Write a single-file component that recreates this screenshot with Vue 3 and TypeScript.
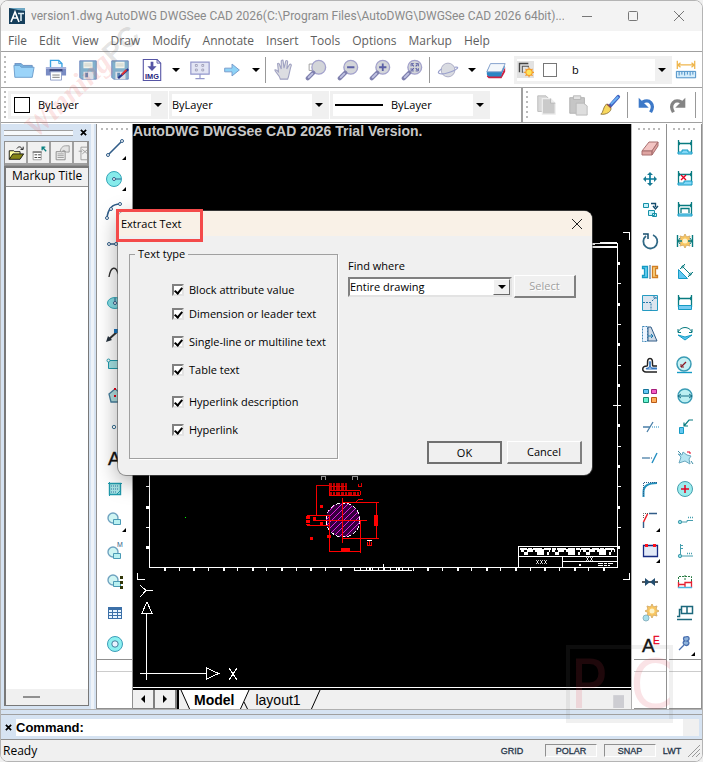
<script setup lang="ts">
import { ref } from 'vue'

interface Tool { id: string; label: string; more?: boolean }
interface Item { kind: 'icon' | 'caret' | 'sep'; id?: string; label?: string }

const menus = ['File', 'Edit', 'View', 'Draw', 'Modify', 'Annotate', 'Insert', 'Tools', 'Options', 'Markup', 'Help']

const lens = '<circle cx="15" cy="9" r="7.500" fill="#d3d5d9" stroke="#a3a2cc" stroke-width="1.500"/><path d="M9 15l-6 6" stroke="#7f80ae" stroke-width="4.500" stroke-linecap="round"/><path d="M8 16l-4 4" stroke="#c0c2e2" stroke-width="2" stroke-linecap="round"/>'
const floppy = '<path d="M3 2h18v20H5l-2-2z" fill="#83b1cc" stroke="#7089c0"/><path d="M7 3h10v7H7z" fill="#f1f3ec"/><path d="M8 5.500h8M8 7.500h8" stroke="#c5cbc4"/><path d="M7 14h11v8H7z" fill="#dcdfe6"/><path d="M9 15h3v5H9z" fill="#5d88b4"/>'
const shapes = '<circle cx="10" cy="10" r="5" fill="#cff5f3" stroke="#6fa3c0" stroke-width="1.400"/><path d="M10.500 11.500h7v5h-7z" fill="#b9f0f0" stroke="#4a9ab5"/>'
const dimBar = '<path d="M5.500 4v12M18.500 4v12M5 7.500h14" stroke="#087b80" stroke-width="1.300" fill="none"/><path d="M7 6L5 7.500 7 9M17 6l2 1.500L17 9" stroke="#087b80" fill="none"/>'
const star = '<path d="M12 5l1.500 3 3.500-1-1 3.500 3 1.500-3 1.500 1 3.500-3.500-1-1.500 3-1.500-3-3.500 1 1-3.500-3-1.500 3-1.500-1-3.500 3.500 1z" fill="#fbc862" stroke="#d9b06a"/><circle cx="12" cy="12" r="2.500" fill="#fdf3c8"/>'

const icons: Record<string, string> = {
  open: '<path d="M2 5h7l2 2h10v3H3z" fill="#74b3e0" stroke="#6a8dc0"/><path d="M1 7h6l2 2h14l-2 11H2z" fill="#9bd4f9" stroke="#6a9ccc"/>',
  print: '<path d="M6 10V1.500h9l3.500 3.500v5z" fill="#f4fbff" stroke="#3aa3e3" stroke-width="1.500"/><path d="M15 1.500V5h3.500" fill="none" stroke="#3aa3e3"/><path d="M1 9h22v9H1z" fill="#7a8cc4"/><path d="M1 9h22v2H1z" fill="#a9b4dd"/><path d="M5 11h14v3H5z" fill="#3f4a80"/><path d="M6 14h12v9H6z" fill="#fff" stroke="#8d9cc8"/><path d="M8 17.500h8M8 20h8" stroke="#777"/>',
  save: floppy,
  saveas: floppy + '<path d="M10 21l11-10" stroke="#27368b" stroke-width="2.500"/><path d="M14 17l5-5" stroke="#e33030" stroke-width="2"/>',
  img: '<path d="M2.500 .5h15l4 4v19h-19z" fill="#fff" stroke="#5655a5" stroke-width="1.200"/><path d="M17.500 .5v4h4" fill="none" stroke="#5655a5"/><path d="M10.500 3h3v5h3.500l-5 5-5-5h3.500z" fill="#5655a5"/><text x="12" y="21.500" font-size="8" font-weight="700" text-anchor="middle" fill="#24247c" font-family="Liberation Sans, sans-serif">IMG</text>',
  monitor: '<path d="M2 3.500h20v13H2zM12 17v4M7 21.500h10" fill="#e3e5f4" stroke="#9498cb" stroke-width="1.300"/><path d="M7 6h2v2H7zM14 6h2v2h-2zM7 11h2v2H7zM14 11h2v2h-2z" fill="#fff" stroke="#8888a8" stroke-width=".8"/>',
  next: '<path d="M4 10h8V5.500l8 6.500-8 6.500V14H4z" fill="#8ed3f7" stroke="#7497c8"/>',
  hand: '<path d="M8 22c-1-5-6-8-6-10 1-1 3 1 4 2L5 5c1-1 2 0 2 1l2 5V2c1-1 2-1 2 0l1 8 2-8c1-1 2 0 2 1l-1 8 3-5c1-1 2 0 2 1-2 5-2 10-4 15z" fill="#dcdde2" stroke="#a0a2c2" stroke-width="1.200"/>',
  zoomwin: '<path d="M4.500 5.500h6v7h-6z" fill="none" stroke="#999"/>' + lens,
  zoomout: lens + '<path d="M11 9h8" stroke="#5b5fa5" stroke-width="2"/>',
  zoomin: lens + '<path d="M11 9h8M15 5v8" stroke="#5b5fa5" stroke-width="2"/>',
  zoomall: lens + '<path d="M12 6l2 2m2 2l2 2M18 6l-2 2m-2 2l-2 2" stroke="#5b5fa5" stroke-width="1.300"/><path d="M11 8V5h3M16 5h3v3M19 10v3h-3M14 13h-3v-3" fill="none" stroke="#5b5fa5"/>',
  planet: '<circle cx="12" cy="12" r="7.500" fill="#d9dbe1" stroke="#a7a9c3"/><path d="M5 11c-7 4-3 7 7 4s14-7 7-6" fill="none" stroke="#9aa0cc" stroke-width="1.300"/>',
  eraser: '<path d="M3 17h15l4-8v5l-4 7H4l-2-2z" fill="#cf2040"/><path d="M2 13l3-5h17l-4 9v2H4l-2-2z" fill="#2b86c4"/><path d="M6 5h16l-4 9H2z" fill="#f3f7fb" stroke="#7f9ccb"/>',
  ruler: '<path d="M2.500 2v9M21.500 2v9M3 6.500h18M6 4L3 6.500 6 9M18 4l3 2.500L18 9" fill="none" stroke="#efb64d" stroke-width="1.400"/><path d="M1.500 13.500h21v7h-21z" fill="#d5edfb" stroke="#3d87c2"/><path d="M4.500 14v4M7.500 14v3M10.500 14v4M13.500 14v3M16.500 14v4M19.500 14v3" stroke="#3d87c2"/>',
  layer: '<path d="M16 3.500H3.500V16M3.500 3.500" fill="none" stroke="#444" stroke-width="2"/><path d="M9 16H7.500V7.500H16V9" fill="none" stroke="#555" stroke-width="1.500"/><path d="M17 9v14M10 16h14M12 11l10 10m0-10L12 21" stroke="#f49a28" stroke-width="1.600"/><circle cx="17" cy="16" r="4.500" fill="#ffe45a" stroke="#f49a28" stroke-width="1.500"/>',
  copy: '<path d="M3 2h9l4 4v13H3z" fill="#d9d9d9" stroke="#bbb"/><path d="M8 5h9l5 5v12H8z" fill="#cacaca" stroke="#eee" stroke-width="1.300"/><path d="M17 5v5h5" fill="#eee" stroke="#b5b5b5"/>',
  paste: '<path d="M3 4h16v17H3z" fill="#c6c6c6" stroke="#b0b0b0"/><path d="M7 2h8v4H7z" fill="#e2e2e2" stroke="#b5b5b5"/><path d="M10 10h8l4 3v10H10z" fill="#dedede" stroke="#b9b9b9"/>',
  brush: '<path d="M21 3l-9 10" stroke="#4263c0" stroke-width="4" stroke-linecap="round"/><path d="M21 3l-8 8" stroke="#6bb2f4" stroke-width="2"/><path d="M8 11l5 4c1 4-5 8-11 7 3-2 2-7 6-11z" fill="#f8d85d" stroke="#92783e"/><path d="M9 11l4 4" stroke="#8a4a52" stroke-width="1.500"/>',
  undo: '<path d="M8 9c8-4 14 2 9 11" fill="none" stroke="#3d79c8" stroke-width="3.500"/><path d="M4 4v11h11z" fill="#3d79c8"/>',
  redo: '<path d="M16 9C8 5 2 11 7 20" fill="none" stroke="#848484" stroke-width="3.500"/><path d="M20 4v11H9z" fill="#848484"/>',
  line: '<path d="M5 19L18 6" stroke="#315d88" stroke-width="1.600"/><circle cx="5" cy="19" r="1.500" fill="#fff" stroke="#315d88"/><circle cx="19" cy="5" r="1.500" fill="#fff" stroke="#315d88"/>',
  circle: '<circle cx="11" cy="12" r="7.500" fill="#86ebeb" stroke="#36a6b8"/><path d="M11 12h7" stroke="#315d88"/><circle cx="11" cy="12" r="1.500" fill="#fff" stroke="#315d88"/>',
  arc: '<path d="M4 20C5 11 9 6 17 6" fill="none" stroke="#315d88" stroke-width="1.600"/><circle cx="4" cy="20" r="1.500" fill="#fff" stroke="#315d88"/><circle cx="8" cy="11" r="1.500" fill="#fff" stroke="#315d88"/><circle cx="17" cy="6" r="1.500" fill="#fff" stroke="#315d88"/>',
  pline: '<path d="M6 15h8c6 0 6-8 0-8" fill="none" stroke="#315d88" stroke-width="1.400"/><circle cx="6" cy="15" r="1.500" fill="#fff" stroke="#315d88"/><circle cx="13" cy="15" r="1.500" fill="#fff" stroke="#315d88"/>',
  spline: '<path d="M6 17c2-12 7-10 9-4s5 2 5-3" fill="none" stroke="#333" stroke-width="1.400"/>',
  ellipse: '<ellipse cx="12" cy="12" rx="7.500" ry="5.500" fill="#86dfe5" stroke="#36a6b8"/><path d="M12 12V7" stroke="#315d88"/><circle cx="12" cy="12" r="1.500" fill="#fff" stroke="#315d88"/>',
  arrow: '<path d="M5 18l10-9" stroke="#333" stroke-width="2"/><path d="M3 20l2-6 4 4z" fill="#25313d"/><path d="M11 7h4v4h-4z" fill="#1976bf"/>',
  rect: '<path d="M5.500 7.500h14v8h-14z" fill="#a6e2e4" stroke="#209aac"/><circle cx="5.500" cy="7.500" r="1.500" fill="#fff" stroke="#209aac"/>',
  poly: '<path d="M12 5l-6 5 2 8h9l2-8z" fill="#b0dddd" stroke="#467e9c" stroke-width="1.300"/><path d="M11 4h2v2h-2zM11 11h2v2h-2z" fill="#e40015"/>',
  point: '<circle cx="11" cy="12" r="1.700" fill="#fff" stroke="#3d7596"/>',
  text: '<text x="5" y="19" font-size="19" fill="#111" stroke="#111" stroke-width=".4" font-family="Liberation Sans, sans-serif">A</text>',
  hatch: '<path d="M6.500 6.500h11v11h-11z" fill="#a6e4e5" stroke="#209aac" stroke-width="1.400"/><path d="M8 9h8M8 12h8M8 15h6" stroke="#3575a4" stroke-dasharray="1 1"/><path d="M13 18l5-5" stroke="#209aac"/><path d="M5 6.500h14M6.500 5v14" stroke="#209aac"/>',
  block: shapes,
  blockm: '<g transform="translate(0 3)">' + shapes + '</g><text x="14" y="8" font-size="7" fill="#315d88" font-family="Liberation Sans, sans-serif">M</text>',
  blocks: shapes + '<path d="M17 6h3v3h-3zM17 11h3v3h-3zM17 16h3v3h-3z" fill="#333809"/>',
  table: '<path d="M5 6h14v12H5z" fill="#3c70a8"/><path d="M6 9h3v2H6zM10 9h4v2h-4zM15 9h3v2h-3zM6 12h3v2H6zM10 12h4v2h-4zM15 12h3v2h-3zM6 15h3v2H6zM10 15h4v2h-4zM15 15h3v2h-3z" fill="#e9f5ff"/>',
  donut: '<circle cx="12" cy="12" r="7.500" fill="#8bf0f1" stroke="#3e9db8"/><circle cx="12" cy="12" r="3.200" fill="#e9f2ff" stroke="#417f9d"/>',
  erase: '<path d="M4 15l7-9h9l-6 9z" fill="#f3c5c3" stroke="#a97070"/><path d="M4 15h10v4H4zM14 15l6-9v4l-6 9z" fill="#dfa5a2" stroke="#a97070"/>',
  move: '<path d="M12 6v12M6 12h12" stroke="#087b9b" stroke-width="1.700"/><path d="M12 5l3 3H9zM12 19l3-3H9zM5 12l3-3v6zM19 12l-3-3v6z" fill="#187a94"/>',
  copyobj: '<path d="M5.500 5.500h5v4h-5zM10.500 12.500h6v5h-6zM14.500 15.500h4v3h-4z" fill="#c6f1fa" stroke="#1590a7"/><path d="M13 5.500h4.500V9M15 8l2.500 3L20 8" fill="none" stroke="#164d6d" stroke-width="1.400"/>',
  rotate: '<path d="M15 6a7 7 0 1 1-7 1" fill="none" stroke="#316986" stroke-width="1.800"/><path d="M5 5h5v5" fill="none" stroke="#164d6d" stroke-width="1.500"/>',
  mirror: '<path d="M4.500 6.500h5v11h-5v-2h2v-7h-2z" fill="#6fd0f3" stroke="#159bc4" stroke-width="1.300"/><path d="M12 5v14" stroke="#315d88"/><path d="M19.500 6.500h-5v11h5v-2h-2v-7h2z" fill="#fbd483" stroke="#d17f24" stroke-width="1.300"/>',
  scale: '<path d="M4.500 4.500h15v15h-15z" fill="#dbe5ef" stroke="#259bc2"/><path d="M5 11.500h8v8M14 10l4-4M15 6h3v3" fill="none" stroke="#2677a7" stroke-dasharray="2 1"/>',
  stretch: '<path d="M4.500 4.500h5v15h-5z" fill="#eef5ff" stroke="#3d86b6" stroke-dasharray="2 1"/><path d="M10 5h3l6 14h-9z" fill="#cfdae6" stroke="#315d88"/><path d="M10 14h5M13 12l2 2-2 2" stroke="#1778ad" fill="none"/>',
  offset: '<path d="M19 19H8c-4.500 0-4.500-6 1-6 1.500-1-1-7.500 3-7.500s1.500 6.500 3 7.500h4" fill="none" stroke="#222" stroke-width="1.500"/><path d="M19 16H9c-1 0-1-1 1-1 3 0 1-6.500 2-6.500s-1 6.500 2 6.500h5" fill="none" stroke="#3577c0" stroke-width="1.200"/>',
  array: '<path d="M5.500 5.500h5v4h-5z" fill="#62c8f5" stroke="#16749a"/><path d="M13.500 5.500h5v4h-5z" fill="#f35fc5" stroke="#a51d7b"/><path d="M5.500 13.500h5v5h-5z" fill="#68f1d1" stroke="#178b72"/><path d="M13.500 13.500h5v5h-5z" fill="#ffae5b" stroke="#b85a17"/>',
  trim: '<path d="M5 12h7M9 17l6-10" stroke="#4a7fa8" stroke-width="1.300"/><path d="M14 12h7" stroke="#218ec1" stroke-dasharray="1 1"/>',
  extend: '<path d="M4 12h7" stroke="#4a7fa8" stroke-width="1.300"/><path d="M11 12h4" stroke="#315d88" stroke-dasharray="1 1"/><path d="M14 17l5-10" stroke="#218ec1" stroke-width="1.400"/>',
  fillet: '<path d="M5.500 20v-4C5 9 10 6 19 6" fill="none" stroke="#2491bd" stroke-width="2"/><path d="M5.500 19V5.500H19" fill="none" stroke="#315d88" stroke-dasharray="1 1"/>',
  chamfer: '<path d="M5.500 20v-6M11 5.500h8" stroke="#315d88" stroke-width="1.400"/><path d="M5.500 14l4-8" stroke="#ed2029" stroke-width="1.500"/><path d="M5.500 10V5.500H10" fill="none" stroke="#555" stroke-dasharray="1 1"/>',
  break: '<path d="M5.500 6.500h14v11h-14z" fill="#e3eaf7" stroke="#172b82" stroke-width="1.300"/><path d="M7 5h3v3H7zM15 5h3v3h-3z" fill="#ff111c"/>',
  join: '<path d="M4 12h16" stroke="#222" stroke-width="1.300"/><path d="M7 8l5 4-5 4zM17 8l-5 4 5 4z" fill="#244e70"/>',
  explode: '<g transform="translate(2 -2)">' + star + '</g><circle cx="8" cy="17" r="3" fill="#a8dfec" stroke="#8bb5c2"/>',
  textedit: '<text x="4" y="20" font-size="19" fill="#111" stroke="#111" stroke-width=".4" font-family="Liberation Sans, sans-serif">A</text><text x="15" y="12" font-size="10" fill="#e40021" stroke="#e40021" stroke-width=".3" font-family="Liberation Sans, sans-serif">E</text>',
  dim1: dimBar + '<path d="M5 18v-2h4v-2h6v2h4v2z" fill="#83d8f7" stroke="#159bc4"/>',
  dim2: dimBar + '<path d="M5 18v-2h6v-2h8v4z" fill="#83d8f7" stroke="#159bc4"/><path d="M8 8l5 5m0-5l-5 5" stroke="#e40020" stroke-width="1.300"/>',
  dim3: dimBar + '<path d="M8 15V10.500h8V15" stroke="#087b80" fill="none" stroke-width="1.300"/><path d="M5 18v-2h14v2z" fill="#83d8f7" stroke="#159bc4"/>',
  dim4: star + '<path d="M4.500 6v12M19.500 6v12M5 12h4M15 12h4" stroke="#087b80" stroke-width="1.400"/><path d="M7 9l-2 3 2 3M17 9l2 3-2 3" fill="none" stroke="#087b80"/>',
  align: '<path d="M5.500 9.500v9h9z" fill="#65c8f2" stroke="#159bc4"/><path d="M9 6l9 9M7 9l5-5M15 17l5-5" stroke="#087b80"/><path d="M9 8.500V6h2.500M18 12.500V15h-2.500" fill="none" stroke="#087b80"/>',
  linear: dimBar + '<path d="M5.500 14.500h13v4h-13z" fill="#78ccf2" stroke="#159bc4"/>',
  angle: '<path d="M5 10c3-6 11-6 14 0M5 7v3.500h3M19 7v3.500h-3" fill="none" stroke="#087b80"/><path d="M5 13l7 5 7-5-7 2z" fill="#5bc4ee" stroke="#159bc4"/>',
  radius: '<circle cx="11" cy="11" r="7" fill="#c6f0f3" stroke="#3a9cb5" stroke-width="1.500"/><path d="M13 9l-5 5" stroke="#8b1620" stroke-width="1.300"/><path d="M8 11v3h3" fill="none" stroke="#8b1620"/><path d="M4 19.500h15" stroke="#159bc4" stroke-width="1.400"/>',
  diameter: '<circle cx="12" cy="12" r="7" fill="#bbeff2" stroke="#3a9cb5" stroke-width="1.400"/><path d="M5 12h14M8 10l-3 2 3 2M16 10l3 2-3 2" fill="none" stroke="#176f86"/>',
  leader: '<path d="M6.500 12.500h4v6h-4z" fill="#65c8f2" stroke="#159bc4"/><path d="M11 11l5-6h4M11 7.500v3.500h4" fill="none" stroke="#087b80" stroke-width="1.200"/>',
  splitd: '<path d="M5 8l3 3-2 6 6-2 5 3-1-5 2-3-4-1-4-3-1 3z" fill="#b6e5f2" stroke="#6aa8bf"/><path d="M5 5l3 3M18 15l2 3" stroke="#3a8ca5"/><path d="M14 6h3v2" stroke="#e40020" fill="none"/>',
  center: '<circle cx="12" cy="12" r="7.500" fill="#9ceced" stroke="#469eae"/><path d="M12 8v8M8 12h8" stroke="#e40020" stroke-width="1.500"/>',
  ord1: '<circle cx="7" cy="14" r="1.700" fill="#8bdbe5" stroke="#469eae"/><path d="M9 14h5v-1.500h6" stroke="#469eae" fill="none"/><path d="M15 9.500h5" stroke="#469eae" stroke-width="1.500" stroke-dasharray="1 1"/>',
  ord2: '<circle cx="7" cy="17" r="1.700" fill="#8bdbe5" stroke="#469eae"/><path d="M7.500 15V5M9 17h11M8 6.500h2M8 9.500h2" stroke="#469eae" fill="none"/><path d="M14 14.500h6" stroke="#469eae" stroke-width="1.500" stroke-dasharray="1 1"/>',
  space: '<path d="M5.500 12V6.500h13V12M12 5v5" stroke="#287b43" fill="none" stroke-dasharray="2 1"/><path d="M5 14.500h7v-2h7M5.500 12v6M12 13v5M18.500 11v7" fill="none" stroke="#e42032" stroke-width="1.300"/><path d="M5 17.500h14" stroke="#4bb7e1" stroke-width="1.500"/>',
  tol: '<path d="M8.500 5.500h11v7h-11zM14 6v6M8 8.500H6.500v7H4M4 18.500h15" fill="none" stroke="#1c687c" stroke-width="1.500"/>',
  style: '<path d="M12 5c5-2 5 3 2 4 4 1 1 6-2 4-3-1-2-4 0-4-2-1-2-4 0-4zM11 13l-5 5" fill="#8fb4dc" stroke="#4a6fae" stroke-width="1.300"/>',
}

const tool = (row: string): Tool[] => row.split(',').map((s) => {
  const [id, label] = s.split(':')
  return { id: id.replace('+', ''), label, more: id.endsWith('+') }
})
const drawTools = tool('line+:Line,circle+:Circle,arc:Arc,pline:Polyline,spline:Spline,ellipse:Ellipse,arrow:Arrow,rect:Rectangle,poly:Polygon,point:Point,text:Text,hatch:Hatch,block+:Block,blockm:Make block,blocks:Block attributes,table:Table,donut:Donut')
const modifyTools = tool('erase:Erase,move:Move,copyobj:Copy,rotate:Rotate,mirror:Mirror,scale:Scale,stretch:Stretch,offset:Offset,array:Array,trim:Trim,extend:Extend,fillet:Fillet,chamfer+:Chamfer,break+:Break,join:Join,explode:Explode,textedit:Edit text')
const dimTools = tool('dim1:Quick dimension,dim2:Remove dimension,dim3:Baseline,dim4:Update dimension,align:Aligned,linear:Linear,angle:Angular,radius:Radius,diameter:Diameter,leader:Leader,splitd:Break dimension,center:Center mark,ord1:Ordinate X,ord2:Ordinate Y,space:Dimension space,tol:Tolerance,style+:Dimension style')

const ic = (id: string, label: string): Item => ({ kind: 'icon', id, label })
const caret: Item = { kind: 'caret', label: 'More' }
const sep: Item = { kind: 'sep' }
const mainTools: Item[] = [
  ic('open', 'Open'), ic('print', 'Print'), ic('save', 'Save'), ic('saveas', 'Save as'), ic('img', 'Export image'), caret,
  ic('monitor', 'Display'), ic('next', 'Next'), caret, sep, ic('hand', 'Pan'), ic('zoomwin', 'Zoom window'),
  ic('zoomout', 'Zoom out'), ic('zoomin', 'Zoom in'), ic('zoomall', 'Zoom extents'), sep, ic('planet', 'Orbit'), caret, ic('eraser', 'Erase'),
]
const editTools: Item[] = [ic('copy', 'Copy'), ic('paste', 'Paste'), ic('brush', 'Match properties'), sep, ic('undo', 'Undo'), ic('redo', 'Redo'), sep]

const textTypes = ref([
  'Block attribute value', 'Dimension or leader text', 'Single-line or multiline text',
  'Table text', 'Hyperlink description', 'Hyperlink',
].map((label) => ({ label, on: true })))
const command = ref('Command:')

const bottomTicks = Array.from({ length: 31 }, (_, i) => Math.round(164 + i * 14.63))
const rightTicks = Array.from({ length: 15 }, (_, i) => Math.round(263 + i * 20.3))
</script>

<template>
  <div class="window">
    <header class="titlebar">
      <svg class="logo" viewBox="0 0 16 16">
        <rect width="16" height="16" fill="#163f5c" />
        <path d="M0 0h16v3L9 2z" fill="#6fa8c4" />
        <path d="M2 14L6 4l4 10M4 10h4" fill="none" stroke="#fff" stroke-width="1.6" />
        <path d="M9 5.500h6M12 5v8" stroke="#dcebf2" stroke-width="1.6" />
      </svg>
      <h1>version1.dwg AutoDWG DWGSee CAD 2026(C:\Program Files\AutoDWG\DWGSee CAD 2026 64bit)...</h1>
      <div class="winbtns">
        <button aria-label="Minimize"><svg viewBox="0 0 12 12"><path d="M1 6.500h10" /></svg></button>
        <button aria-label="Maximize"><svg viewBox="0 0 12 12"><rect x="1.500" y="1.500" width="9" height="9" rx="1" /></svg></button>
        <button aria-label="Close"><svg viewBox="0 0 12 12"><path d="M1 1l10 10M11 1L1 11" /></svg></button>
      </div>
    </header>

    <nav class="menubar">
      <a v-for="m in menus" :key="m" href="#">{{ m }}</a>
    </nav>

    <div class="bar">
      <i class="vgrip" />
      <template v-for="(t, i) in mainTools" :key="i">
        <i v-if="t.kind === 'sep'" class="sep" />
        <button v-else :class="t.kind" :aria-label="t.label">
          <svg v-if="t.id" viewBox="0 0 24 24" v-html="icons[t.id]" />
          <svg v-else viewBox="0 0 8 4"><path d="M0 0h8L4 4z" /></svg>
        </button>
      </template>
      <div class="combo layer">
        <select aria-label="Layer"><option>b</option></select>
        <span class="pre"><svg class="lay" viewBox="0 0 24 24" v-html="icons.layer" /><i class="swatch thin" /></span>
        <span class="drop"><svg viewBox="0 0 8 4"><path d="M0 0h8L4 4z" /></svg></span>
      </div>
      <button class="icon" aria-label="Measure"><svg viewBox="0 0 24 24" v-html="icons.ruler" /></button>
    </div>

    <div class="bar second">
      <i class="vgrip" />
      <div class="combo color">
        <select aria-label="Color"><option>ByLayer</option></select>
        <span class="pre"><i class="swatch" /></span>
        <span class="drop"><svg viewBox="0 0 8 4"><path d="M0 0h8L4 4z" /></svg></span>
      </div>
      <div class="combo">
        <select aria-label="Linetype"><option>ByLayer</option></select>
        <span class="drop"><svg viewBox="0 0 8 4"><path d="M0 0h8L4 4z" /></svg></span>
      </div>
      <div class="combo weight">
        <select aria-label="Lineweight"><option>ByLayer</option></select>
        <span class="pre"><i class="stroke" /></span>
        <span class="drop"><svg viewBox="0 0 8 4"><path d="M0 0h8L4 4z" /></svg></span>
      </div>
      <div class="edit">
        <i class="vgrip" />
        <template v-for="(t, i) in editTools" :key="i">
          <i v-if="t.kind === 'sep'" class="sep" />
          <button v-else class="icon" :aria-label="t.label"><svg viewBox="0 0 24 24" v-html="icons[t.id!]" /></button>
        </template>
      </div>
    </div>

    <main class="work">
      <aside class="dock">
        <div class="dockhead"><i /><button aria-label="Close panel"><svg viewBox="0 0 8 8"><path d="M1 1l6 6M7 1L1 7" /></svg></button></div>
        <div class="docktools">
          <button aria-label="Open markup"><svg viewBox="0 0 20 20"><path d="M2.500 17V7.500h5l1 1h6V11" fill="#ffffa0" stroke="#111" /><path d="M2.500 17l4-6h12l-4 6z" fill="#858516" stroke="#111" /><path d="M11 5c2-3 5-2 6 1M18 3v3h-3" fill="none" stroke="#111" /></svg></button>
          <button aria-label="Export markup"><svg viewBox="0 0 20 20"><path d="M3.500 8.500h9v9h-9z" fill="#fff" stroke="#999" /><path d="M3 9h10" stroke="#888" stroke-width="2" /><path d="M5 12h3m1 0h3M5 15h3m1 0h3" stroke="#333" /><path d="M18 8l-4-4M13.500 7V3.500H17" fill="none" stroke="#0a8080" stroke-width="1.500" /></svg></button>
          <button aria-label="Markup properties"><svg viewBox="0 0 20 20"><path d="M3.500 8.500h10v9h-10z" fill="#eee" stroke="#888" /><path d="M5 11h7M5 13h7M5 15h7M8 8c1-5 4-6 6-6h4v7h-3l-3-2-3 2z" fill="#e4e4e4" stroke="#999" /></svg></button>
          <button aria-label="Delete markup"><svg viewBox="0 0 20 20"><path d="M5.500 3.500h10v14h-10zM7 6l6 5m0-5l-6 5M3 8h4" fill="none" stroke="#999" /></svg></button>
        </div>
        <div class="docklist">
          <div class="colhead">Markup Title</div>
          <div class="hscroll"><i /></div>
        </div>
      </aside>

      <div class="strip left">
        <i class="hgrip" />
        <button v-for="t in drawTools" :key="t.id" :aria-label="t.label" :class="{ more: t.more }"><svg viewBox="0 0 24 24" v-html="icons[t.id]" /></button>
        <i class="tail" />
      </div>

      <section class="stage">
        <svg class="canvas" viewBox="133 124 498 563" preserveAspectRatio="xMinYMin slice" shape-rendering="crispEdges">
          <text class="trial" x="133" y="136">AutoDWG DWGSee CAD 2026 Trial Version.</text>
          <g fill="none" stroke="#fff">
            <path d="M137.500 573v6.500h7M623 232.500h6.500v7M629.500 573v6.500h-7" />
            <path d="M149.500 243v324.500h468V243.500h-468M617 246.500H149" />
            <path d="M592 243.500h3M600 243h17M592 246.500h25" stroke-width="2" />
            <path v-for="(x, i) in bottomTicks" :key="'b' + x" :d="`M${x}.500 568v3`" :stroke-width="i % 2 ? 1 : 2" />
            <path v-for="(y, i) in rightTicks" :key="'r' + y" :d="`M618 ${y}.500h${i % 2 ? 3 : 2}M146 ${y}.500h3`" :stroke-width="i % 2 ? 1 : 3" />
            <path d="M613 405.500h8M383.500 564v4M354 570.500h58" />
            <path d="M354 568.500h58" stroke-width="3" stroke-dasharray="1 5" />
            <path d="M518.500 546.500h99v21h-99zM518 556.500h99M562.500 556v11M562 561.500h55" />
            <path d="M520 548.500h96" stroke-width="2" stroke-dasharray="7 1 4 1 9 2" />
            <path d="M521 550.500h94" stroke-width="3" stroke-dasharray="3 3 6 2 9 5 1 2" />
            <path d="M524 553.500h90" stroke-width="3" stroke-dasharray="4 9 7 3 2 6" />
            <path d="M598 563.500h16M598 565.500h12" stroke-dasharray="5 1 3 1" />
            <path d="M536 560l3 4m0-4l-3 4m4-4l3 4m0-4l-3 4m4-4l3 4m0-4l-3 4M586 557l3 4m0-4l-3 4m4-4l3 4m0-4l-3 4" stroke-width=".8" />
            <path d="M579 564.500h2" stroke-width="2" />
            <path d="M321 480l1-4h3l1 4M352 480l1-4h4l1 4" stroke="#bbb" />
          </g>
          <path d="M185 517.500h1" stroke="#0f0" />
          <clipPath id="disc"><circle cx="343" cy="520" r="17" /></clipPath>
          <circle cx="343" cy="520" r="17" fill="#35003e" stroke="#fff" stroke-dasharray="4 2" />
          <g clip-path="url(#disc)" stroke="#e020e0">
            <path d="M313 539l40-40M319 539l40-40M325 539l40-40M331 539l40-40M337 539l40-40M343 539l40-40M307 539l40-40M301 539l40-40" />
          </g>
          <g fill="none" stroke="#f00">
            <path d="M342.500 498v45M313 520.500h54" />
            <path d="M343 502.500h36M343 538.500h36M376.500 502v37M329.500 515v37M360.500 520v33M329 551.500h32" />
            <path d="M316.500 515V485.500h13M307 515.500h22M307 525.500h22" />
            <path d="M329 484.500h18M329 488.500h18M329 493.500h31" stroke-width="4" stroke-dasharray="3 1 2 1 4 1" stroke="#d00000" />
            <path d="M329.500 483v12M329 486.500h18M329 490.500h31M329 495.500h31M360 491v4" />
            <path d="M375.500 515v11" stroke-width="4" />
            <path d="M307.500 516v9" stroke-width="4" stroke-dasharray="3 1" />
            <path d="M341 549.500h9M320 506.500h3M310 538.500h3M313 518h3M320 523h3M327 536h4" stroke-width="3" />
            <path d="M356 502l3-3h4M358 484v2h3v-3M369.500 540v6M367.500 542v3h4v-3" />
            <path d="M367 540.500h5" stroke="#fff" />
          </g>
          <path d="M140 585l6 5.500L140 597M146 590.500h7M147 602l-5 11h10zM146.500 613v67M140 673.500h66M206.500 668v11l12-5.500zM229 668l8 12M237 668l-8 12" fill="none" stroke="#fff" />
        </svg>
        <div class="tabs">
          <button class="nav" aria-label="Previous"><svg viewBox="0 0 4 8"><path d="M4 0v8L0 4z" /></svg></button>
          <button class="nav" aria-label="Next layout"><svg viewBox="0 0 4 8"><path d="M0 0v8l4-4z" /></svg></button>
          <svg class="slant" viewBox="0 0 16 20"><path d="M4 0h12v20h-3z" fill="#fff" stroke="none" /><path d="M1 0v20" stroke-width="2" /><path d="M4 0l9 20" /></svg>
          <button class="tab on">Model</button>
          <svg class="slant" viewBox="0 0 16 20"><path d="M0 0h14L5 20H0z" fill="#fff" stroke="none" /><path d="M14 0L5 20M9 12l4 8" /></svg>
          <button class="tab">layout1</button>
          <svg class="slant" viewBox="0 0 16 20"><path d="M15 0L6 20" /></svg>
        </div>
      </section>

      <div class="strip right">
        <i class="hgrip" />
        <button v-for="t in modifyTools" :key="t.id" :aria-label="t.label" :class="{ more: t.more }"><svg viewBox="0 0 24 24" v-html="icons[t.id]" /></button>
        <i class="tail" />
      </div>
      <div class="strip right">
        <i class="hgrip" />
        <button v-for="t in dimTools" :key="t.id" :aria-label="t.label" :class="{ more: t.more }"><svg viewBox="0 0 24 24" v-html="icons[t.id]" /></button>
        <i class="tail" />
      </div>
    </main>

    <div class="command">
      <button aria-label="Close command line"><svg viewBox="0 0 8 8"><path d="M1 1l6 6M7 1L1 7" /></svg></button>
      <input v-model="command" aria-label="Command line">
      <i />
    </div>

    <footer class="status">
      <span>Ready</span>
      <button>GRID</button>
      <button class="in">POLAR</button>
      <button class="in">SNAP</button>
      <button class="lwt">LWT</button>
      <svg viewBox="0 0 12 12"><path d="M0 12L12 0M4 12l8-8M8 12l4-4" /></svg>
    </footer>

    <div class="dialog" role="dialog" aria-labelledby="dlg-title">
      <div class="dlghead">
        <h2 id="dlg-title">Extract Text</h2>
        <button aria-label="Close dialog"><svg viewBox="0 0 12 12"><path d="M1 1l10 10M11 1L1 11" /></svg></button>
      </div>
      <div class="dlgbody">
        <fieldset>
          <legend>Text type</legend>
          <label v-for="t in textTypes" :key="t.label"><input v-model="t.on" type="checkbox">{{ t.label }}</label>
        </fieldset>
        <div class="where">
          <label for="where">Find where</label>
          <div class="row">
            <div class="combo classic">
              <select id="where"><option>Entire drawing</option></select>
              <span class="drop"><svg viewBox="0 0 8 4"><path d="M0 0h8L4 4z" /></svg></span>
            </div>
            <button class="push" disabled>Select</button>
          </div>
          <div class="row end">
            <button class="push default">OK</button>
            <button class="push">Cancel</button>
          </div>
        </div>
      </div>
    </div>
    <div class="marker" />

    <div class="mark-top"><em>Winning</em><b>PC</b></div>
    <div class="mark-corner"><span>P</span><b>.</b><span>C</span></div>
  </div>
</template>

<style>
body {
  background: #f0f0f0;
}
</style>

<style scoped>
* {
  box-sizing: border-box;
}
.window {
  position: relative;
  display: flex;
  flex-direction: column;
  min-height: 100vh;
  overflow: hidden;
  border: 1px solid #b4b4b4;
  border-radius: 8px;
  background: #fff;
  color: #000;
  font: 12px/16px "Open Sans", "Noto Sans", sans-serif;
}
button {
  margin: 0;
  padding: 0;
  border: 0;
  background: none;
  color: inherit;
  font: inherit;
}
button, .pre, .drop {
  display: flex;
  align-items: center;
  justify-content: center;
}
i {
  display: block;
  flex: none;
}
svg {
  display: block;
  flex: none;
}

.titlebar {
  display: flex;
  align-items: center;
  height: 30px;
  padding-left: 8px;
  background: #f3f3f3;
}
.logo {
  width: 16px;
  height: 16px;
}
h1 {
  flex: 1;
  margin: 0 0 0 6px;
  overflow: hidden;
  color: #8a8a8a;
  font: 12px/16px Roboto, "Open Sans", sans-serif;
  white-space: nowrap;
}
.winbtns {
  display: flex;
}
.winbtns button {
  width: 46px;
  height: 30px;
}
.winbtns svg {
  width: 12px;
  height: 12px;
}
.winbtns path, .winbtns rect {
  fill: none;
  stroke: #777;
}
.menubar {
  display: flex;
  gap: 12px;
  height: 21px;
  padding: 2px 7px 0;
  border-bottom: 1px solid #a0a0a0;
}
.menubar a {
  color: #5e5e5e;
  text-decoration: none;
}

.bar {
  display: flex;
  align-items: center;
  height: 36px;
  border-bottom: 1px solid #a0a0a0;
}
.vgrip {
  width: 2px;
  height: 28px;
  margin: 0 2px 0 3px;
  background: repeating-linear-gradient(#bbb 0 2px, transparent 2px 5px);
}
.bar .icon {
  flex: none;
  width: 32px;
  height: 32px;
}
.bar .icon svg {
  width: 22px;
  height: 22px;
}
.bar .caret {
  flex: none;
  width: 16px;
  height: 28px;
}
.caret svg, .drop svg {
  width: 8px;
  height: 4px;
}
.sep {
  width: 1px;
  height: 26px;
  margin: 0 2px 0 1px;
  background: #999;
}
.combo {
  display: grid;
  width: 160px;
  height: 28px;
  border: 3px solid #f0f0f0;
  background: #fff;
  font-size: 11px;
}
.combo > * {
  grid-area: 1 / 1;
  min-width: 0;
}
.combo select {
  width: 100%;
  padding: 0 16px 0 0;
  appearance: none;
  border: 0;
  background: none;
  color: #000;
  font: inherit;
}
.pre {
  gap: 9px;
  align-self: center;
  justify-self: start;
  pointer-events: none;
}
.drop {
  justify-self: end;
  width: 14px;
  background: #f0f0f0;
  pointer-events: none;
}
.swatch {
  width: 16px;
  height: 16px;
  margin-left: 3px;
  border: 1px solid #000;
}
.swatch.thin {
  width: 14px;
  height: 14px;
  margin: 0;
  border-color: #777;
}
.combo.color select {
  padding-left: 27px;
}
.combo.weight select {
  padding-left: 58px;
}
.combo.layer {
  flex: 1;
  margin-right: -2px;
  margin-left: 2px;
}
.combo.layer select {
  padding-left: 55px;
}
.lay {
  width: 17px;
  height: 17px;
  background: #e2e2e2;
}
.stroke {
  width: 48px;
  height: 2px;
  margin-left: 2px;
  background: #000;
}
.bar.second {
  height: 35px;
}
.second > .combo + .combo {
  margin-left: 1px;
}
.edit {
  display: flex;
  flex: 1;
  align-items: center;
  height: 35px;
  margin-left: 31px;
  border-left: 2px solid #a0a0a0;
}

.work {
  display: flex;
  flex: 1;
  padding-top: 1px;
}
.dock {
  display: flex;
  flex: none;
  flex-direction: column;
  width: 96px;
  padding: 0 7px 3px 3px;
  border-right: 1px solid #909090;
  background: linear-gradient(90deg, #d6e3f2 90px, #eef3f9 90px 93px, #d6e3f2 93px);
}
.dockhead {
  display: flex;
  gap: 4px;
  align-items: center;
  height: 17px;
}
.dockhead i {
  flex: 1;
  height: 6px;
  border: 1px solid #a0a0a0;
  border-width: 1px 0;
  background: #f6f9fc;
}
.dockhead button {
  width: 12px;
}
.dockhead svg, .command button svg {
  width: 7px;
  height: 7px;
  fill: none;
  stroke: #000;
  stroke-width: 2;
}
.docktools {
  display: flex;
  height: 25px;
  overflow: hidden;
  border: 1px solid #909090;
  border-right-width: 2px;
  background: #f0f0f0;
}
.docktools button {
  flex: none;
  width: 23px;
  border-right: 2px solid #a0a0a0;
  border-bottom: 2px solid #a0a0a0;
}
.docktools svg {
  width: 18px;
  height: 18px;
}
.docklist {
  display: flex;
  flex: 1;
  flex-direction: column;
  border: 2px solid #787878;
  border-width: 2px 1px 1px 2px;
  background: #fff;
}
.colhead {
  height: 19px;
  padding-left: 6px;
  border-bottom: 1px solid #909090;
  background: #f0f0f0;
  white-space: nowrap;
}
.hscroll {
  height: 16px;
  margin-top: auto;
  padding: 7px 17px;
  background: #f0f0f0;
}
.hscroll i {
  width: 17px;
  height: 2px;
  background: #909090;
}

.strip {
  display: flex;
  flex: none;
  flex-direction: column;
  border-right: 1px solid #909090;
}
.strip.left {
  width: 36px;
}
.strip.right {
  width: 35px;
  padding-left: 2px;
}
.hgrip {
  height: 8px;
  margin: 0 4px;
  background: repeating-linear-gradient(90deg, #bbb 0 2px, transparent 2px 5px) 0 4px / 100% 2px no-repeat;
}
.strip button {
  position: relative;
  height: 31px;
}
.strip svg {
  width: 24px;
  height: 24px;
}
.strip .more::after {
  position: absolute;
  right: 6px;
  bottom: 3px;
  border: 2px solid #000;
  border-top-color: transparent;
  border-left-color: transparent;
  content: "";
}
.tail {
  flex: 1;
  border-top: 1px solid #909090;
  border-bottom: 1px solid #909090;
  background: linear-gradient(transparent 11px, #ccc 11px 12px, transparent 12px);
}

.stage {
  display: flex;
  flex: 1;
  flex-direction: column;
  min-width: 0;
  border-right: 1px solid #b0b0b0;
  background: #000;
}
.canvas {
  width: 100%;
  flex: 1 0 0;
  min-height: 0;
}
.trial {
  fill: #c8c8c8;
  font: 700 14px "Liberation Sans", sans-serif;
}
.tabs {
  display: flex;
  height: 22px;
  border-top: 1px solid #fff;
  background: #f0f0f0;
  box-shadow: inset 0 2px #000;
  font: 14px/20px "Liberation Sans", sans-serif;
}
.tabs > * {
  margin-top: 2px;
}
.nav {
  width: 22px;
  border-right: 2px solid #808080;
  border-bottom: 1px solid #808080;
}
.nav svg {
  width: 4px;
  height: 8px;
}
.slant {
  width: 16px;
  height: 20px;
  fill: none;
  stroke: #000;
}
.tab {
  padding: 0 4px;
}
.tab.on {
  padding: 0 1px;
  background: #fff;
  font-weight: 700;
}

.command {
  display: flex;
  align-items: center;
  height: 31px;
  padding: 5px 3px 0 0;
  border-top: 1px solid #b0b0b0;
  border-bottom: 1px solid #909090;
  background: linear-gradient(#d6e3f2 4px, #a0a0a0 4px 5px, #d6e3f2 5px);
}
.command button {
  width: 15px;
}
.command input {
  flex: 1;
  min-width: 0;
  height: 17px;
  padding: 0;
  border: 0;
  font: 700 13px/16px "Liberation Sans", sans-serif;
}
.command i {
  width: 16px;
  height: 17px;
  background: #f0f0f0;
}
.status {
  display: flex;
  gap: 7px;
  align-items: center;
  height: 21px;
  padding: 0 2px;
  background: #f0f0f0;
}
.status span {
  flex: 1;
}
.status button {
  width: 52px;
  height: 13px;
  color: #26364a;
  font: 9px/12px "Liberation Sans", sans-serif;
  -webkit-text-stroke: 0.3px #26364a;
}
.status .in {
  border: 1px solid #fff;
  border-top-color: #909090;
  border-left-color: #909090;
}
.status .lwt {
  width: 18px;
}
.status svg {
  width: 12px;
  height: 12px;
  fill: none;
  stroke: #999;
}

.dialog {
  position: absolute;
  top: 210px;
  left: 117px;
  width: 474px;
  overflow: hidden;
  border-radius: 8px;
  background: #f0f0f0;
  box-shadow: 0 0 0 1px rgb(90 90 90 / 60%), 0 6px 22px rgb(0 0 0 / 35%);
  font: 11px/14px "Open Sans", "Noto Sans", sans-serif;
}
.dlghead {
  display: flex;
  justify-content: space-between;
  height: 25px;
  padding-left: 3px;
  background: #f9f1e7;
}
h2 {
  margin: 0;
  font: 11px/25px "Open Sans", sans-serif;
}
.dlghead button {
  width: 31px;
}
.dlghead svg {
  width: 12px;
  height: 12px;
  fill: none;
  stroke: #222;
}
.dlgbody {
  display: flex;
  gap: 10px;
  padding: 10px 10px 11px 11px;
}
fieldset {
  display: grid;
  grid-template-rows: 24px 28px 28px 32px 28px 34px;
  width: 209px;
  margin: 0 0 5px;
  padding: 21px 0 1px 42px;
  border: 1px solid #a0a0a0;
  box-shadow: 1px 1px #fff;
}
legend {
  margin-left: -37px;
  padding: 0 3px;
  background: #f0f0f0;
  line-height: 16px;
}
fieldset label {
  display: flex;
  gap: 5px;
  align-items: center;
  height: 14px;
}
input[type="checkbox"] {
  width: 12px;
  height: 12px;
  margin: 0;
  appearance: none;
  border: 2px solid #e3e3e3;
  border-top-color: #808080;
  border-left-color: #808080;
  background: #fff;
}
input[type="checkbox"]:checked::after {
  display: block;
  width: 3px;
  height: 6px;
  margin: 0 0 0 2px;
  transform: rotate(40deg);
  border: solid #000;
  border-width: 0 2px 2px 0;
  content: "";
}
.where {
  display: flex;
  flex: 1;
  flex-direction: column;
  padding-top: 13px;
}
.where > label {
  margin-bottom: 2px;
}
.row {
  display: flex;
  gap: 2px;
  align-items: center;
}
.row.end {
  gap: 5px;
  justify-content: flex-end;
  margin-top: auto;
}
.classic {
  width: 164px;
  height: 20px;
  border: 2px solid #e3e3e3;
  border-top-color: #808080;
  border-left-color: #808080;
}
.classic .drop {
  width: 17px;
  border: 1px solid #fff;
  border-right-color: #696969;
  border-bottom-color: #696969;
}
.push {
  width: 75px;
  height: 23px;
  border: 1px solid #fff;
  border-right: 2px solid #808080;
  border-bottom: 2px solid #808080;
}
.push.default {
  border: 2px solid #707070;
}
.push:disabled {
  width: 62px;
  color: #a0a0a0;
  text-shadow: 1px 1px #fff;
}
.marker {
  position: absolute;
  top: 208px;
  left: 115px;
  width: 87px;
  height: 33px;
  border: 3px solid #f44a4a;
  pointer-events: none;
}
.mark-top {
  position: absolute;
  top: 62px;
  left: 8px;
  transform: rotate(-44deg);
  color: rgb(240 90 90 / 18%);
  font: 700 30px/36px "Liberation Serif", serif;
  white-space: nowrap;
  pointer-events: none;
}
.mark-top b {
  color: rgb(120 120 120 / 20%);
  font: 700 28px/36px "Liberation Sans", sans-serif;
}
.mark-corner {
  position: absolute;
  right: 29px;
  bottom: 38px;
  display: flex;
  justify-content: space-between;
  width: 107px;
  height: 78px;
  border: 4px solid rgb(120 120 120 / 11%);
  color: rgb(220 60 80 / 14%);
  font: 68px/72px "DejaVu Sans Condensed", "DejaVu Sans", sans-serif;
  pointer-events: none;
}
.mark-corner b {
  color: rgb(100 100 120 / 25%);
}
</style>
